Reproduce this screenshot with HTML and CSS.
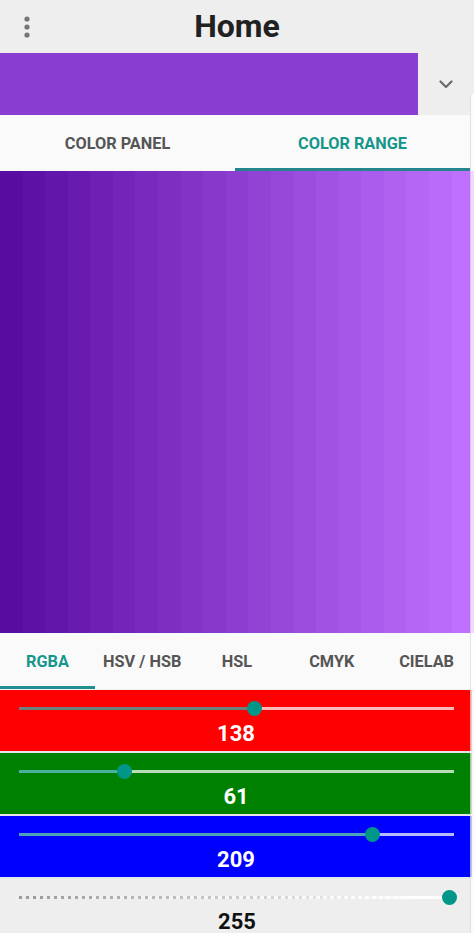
FILE: index.html
```html
<!DOCTYPE html>
<html lang="en">
<head>
<meta charset="utf-8">
<title>Home</title>
<link rel="stylesheet" href="styles.css">
</head>
<body>
<div class="app">
  <header class="topbar">
    <div class="menu">
      <svg width="8" height="22" viewBox="0 0 8 22"><circle cx="4" cy="3" r="2.6" fill="#757575"/><circle cx="4" cy="11" r="2.6" fill="#757575"/><circle cx="4" cy="19" r="2.6" fill="#757575"/></svg>
    </div>
    <h1 class="title">Home</h1>
    <div></div>
  </header>

  <div class="preview-row">
    <div class="swatch"></div>
    <div class="dropdown">
      <svg width="14" height="9" viewBox="0 0 14 9"><path d="M1.5 1.5 L7 7 L12.5 1.5" fill="none" stroke="#6a6a6a" stroke-width="2.2" stroke-linecap="round" stroke-linejoin="round"/></svg>
    </div>
  </div>

  <nav class="tabs two">
    <div class="tab">COLOR PANEL</div>
    <div class="tab active">COLOR RANGE</div>
  </nav>

  <div class="range">
    <div class="stripe" style="background: rgb(88,12,160)"></div>
    <div class="stripe" style="background: rgb(93,17,165)"></div>
    <div class="stripe" style="background: rgb(98,22,170)"></div>
    <div class="stripe" style="background: rgb(104,27,174)"></div>
    <div class="stripe" style="background: rgb(109,32,179)"></div>
    <div class="stripe" style="background: rgb(114,37,184)"></div>
    <div class="stripe" style="background: rgb(119,42,189)"></div>
    <div class="stripe" style="background: rgb(124,47,193)"></div>
    <div class="stripe" style="background: rgb(130,52,198)"></div>
    <div class="stripe" style="background: rgb(135,57,203)"></div>
    <div class="stripe" style="background: rgb(140,62,208)"></div>
    <div class="stripe" style="background: rgb(145,67,212)"></div>
    <div class="stripe" style="background: rgb(150,72,217)"></div>
    <div class="stripe" style="background: rgb(156,77,222)"></div>
    <div class="stripe" style="background: rgb(161,82,226)"></div>
    <div class="stripe" style="background: rgb(166,87,231)"></div>
    <div class="stripe" style="background: rgb(171,92,236)"></div>
    <div class="stripe" style="background: rgb(176,97,240)"></div>
    <div class="stripe" style="background: rgb(182,102,245)"></div>
    <div class="stripe" style="background: rgb(187,107,250)"></div>
    <div class="stripe" style="background: rgb(192,112,255)"></div>
  </div>

  <nav class="tabs five">
    <div class="tab active">RGBA</div>
    <div class="tab">HSV / HSB</div>
    <div class="tab">HSL</div>
    <div class="tab">CMYK</div>
    <div class="tab">CIELAB</div>
  </nav>

  <section class="channels">
    <div class="channel red">
      <div class="slider">
        <div class="fill" style="width: 54.1%"></div>
        <div class="thumb" style="left: 54.1%"></div>
      </div>
      <div class="value">138</div>
    </div>
    <div class="channel green">
      <div class="slider">
        <div class="fill" style="width: 24.2%"></div>
        <div class="thumb" style="left: 24.2%"></div>
      </div>
      <div class="value">61</div>
    </div>
    <div class="channel blue">
      <div class="slider">
        <div class="fill" style="width: 81.3%"></div>
        <div class="thumb" style="left: 81.3%"></div>
      </div>
      <div class="value">209</div>
    </div>
    <div class="channel alpha">
      <div class="slider">
        <div class="thumb" style="left: 98.9%"></div>
      </div>
      <div class="value">255</div>
    </div>
  </section>

  <div class="edge"></div>
</div>
</body>
</html>
```

FILE: styles.css
```css
html, body {
  margin: 0;
  padding: 0;
  overflow: hidden;
}

body {
  font-family: Roboto, "Liberation Sans", Arial, sans-serif;
  background: #eeeeee;
  width: 474px;
}

.app {
  position: relative;
  width: 474px;
}

.topbar {
  height: 53px;
  background: #eeeeee;
  display: grid;
  grid-template-columns: 54px 1fr 54px;
  align-items: center;
}

.menu {
  display: flex;
  justify-content: center;
  align-items: center;
  padding-top: 1px;
}

.menu svg {
  display: block;
}

.title {
  margin: 0;
  text-align: center;
  font-size: 32px;
  font-weight: 700;
  color: #212121;
  line-height: 1;
  padding-bottom: 2px;
}

.preview-row {
  height: 62px;
  display: flex;
}

.swatch {
  width: 418px;
  background: #8a3dd1;
}

.dropdown {
  flex: 1;
  display: flex;
  align-items: center;
  justify-content: center;
  padding-top: 1px;
}

.dropdown svg {
  display: block;
}

.tabs {
  height: 56px;
  background: #fafafa;
  display: flex;
}

.tabs.two {
  width: 470px;
}

.tab {
  flex: 1;
  display: flex;
  align-items: center;
  justify-content: center;
  font-size: 16.3px;
  font-weight: 700;
  color: #555555;
  box-sizing: border-box;
  border-bottom: 3px solid transparent;
  padding-top: 4px;
}

.tab.active {
  color: #16968a;
  border-bottom-color: #24858f;
}

.tabs.five .tab.active {
  border-bottom-color: #1f8f92;
}

.range {
  height: 462px;
  display: flex;
}

.stripe {
  flex: 1;
}

.channels {
  border-top: 1px solid #f2f2f2;
  background: #e6e6e6;
}

.channel {
  height: 61px;
  width: 472px;
  margin-bottom: 2px;
  display: flex;
  flex-direction: column;
  align-items: center;
  box-sizing: border-box;
  padding-top: 17px;
}

.channel.red { background: #ff0000; }
.channel.green { background: #008000; }
.channel.blue { background: #0000ff; }
.channel.alpha {
  background: #eeeeee;
  width: 474px;
  height: 62px;
  margin-bottom: 0;
}

.slider {
  position: relative;
  width: 435px;
  height: 3px;
  align-self: flex-start;
  margin-left: 19px;
  background: rgba(255, 255, 255, 0.72);
}

.fill {
  position: absolute;
  left: 0;
  top: 0;
  bottom: 0;
  background: rgba(0, 150, 136, 0.6);
}

.red .fill {
  background: rgba(0, 150, 136, 0.45);
  box-shadow: inset 0 0 0 10px rgba(80, 90, 90, 0.5);
}

.thumb {
  position: absolute;
  top: 50%;
  width: 15px;
  height: 15px;
  margin-left: -7.5px;
  margin-top: -7.5px;
  border-radius: 50%;
  background: #009688;
}

.alpha .slider {
  background:
    linear-gradient(90deg, rgba(255,255,255,0) 0%, rgba(255,255,255,0.6) 60%, #ffffff 92%),
    repeating-linear-gradient(90deg, #999999 0 3px, transparent 3px 7px);
}

.value {
  margin-top: 11px;
  font-size: 22px;
  font-weight: 700;
  color: #ffffff;
  line-height: 26px;
}

.alpha .value {
  color: #111111;
  margin-top: 10px;
}

.edge {
  position: absolute;
  right: 0;
  top: 93px;
  bottom: 0;
  width: 3px;
  background: rgba(255, 255, 255, 0.75);
  border-left: 1px solid rgba(0, 0, 0, 0.1);
  border-top-left-radius: 4px;
}
```
